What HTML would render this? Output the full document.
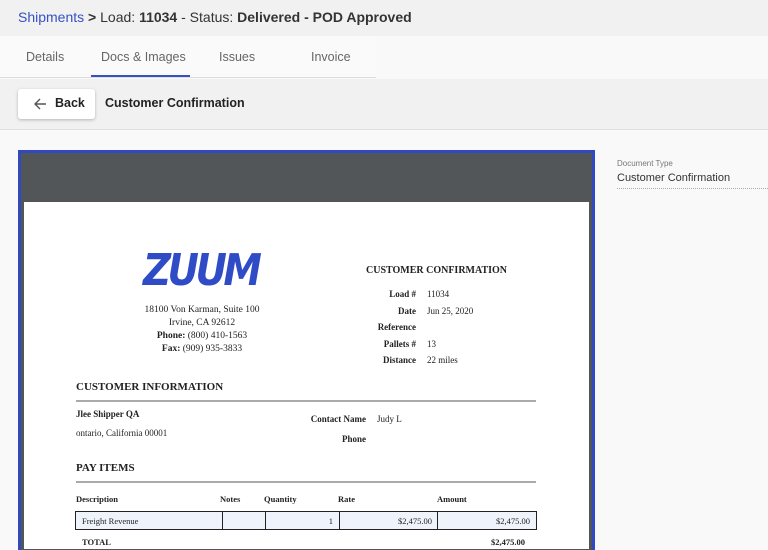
<!DOCTYPE html>
<html><head><style>
*{margin:0;padding:0;box-sizing:border-box}
body{width:768px;height:549px;overflow:hidden;background:#f9f9f9;font-family:"Liberation Sans",sans-serif;position:relative}
.a{position:absolute;white-space:nowrap}
.s{font-family:"Liberation Serif",serif;color:#222}
.b{font-weight:bold}
</style></head><body>
<div class="a" style="left:0;top:0;width:768px;height:36px;background:#f1f1f1"></div>
<div class="a" style="left:18px;top:9px;font-size:14px;color:#333"><span style="color:#3551c4">Shipments</span> <b>&gt;</b> Load: <b>11034</b> - Status: <b>Delivered - POD Approved</b></div>
<div class="a" style="left:0;top:36px;width:376px;height:42px;background:#fafafa;border-bottom:1px solid #ddd"></div>
<div class="a" style="left:26px;top:50px;font-size:12.5px;color:#666">Details</div>
<div class="a" style="left:101px;top:50px;font-size:12.5px;color:#666">Docs &amp; Images</div>
<div class="a" style="left:219px;top:50px;font-size:12.5px;color:#666">Issues</div>
<div class="a" style="left:311px;top:50px;font-size:12.5px;color:#666">Invoice</div>
<div class="a" style="left:91px;top:75px;width:99px;height:2px;background:#3551c4"></div>
<div class="a" style="left:0;top:79px;width:768px;height:51px;background:#f1f1f1;border-bottom:1px solid #e0e0e0"></div>
<div class="a" style="left:18px;top:89px;width:77px;height:30px;background:#fff;border-radius:3px;box-shadow:0 1px 3px rgba(0,0,0,.25)"></div>
<svg class="a" style="left:33px;top:97px" width="14" height="14" viewBox="0 0 14 14"><path d="M13 7H2M7 2L2 7l5 5" stroke="#555" stroke-width="1.4" fill="none"/></svg>
<div class="a" style="left:55px;top:96px;font-size:12.5px;font-weight:bold;color:#222">Back</div>
<div class="a" style="left:105px;top:96px;font-size:12.5px;font-weight:bold;color:#222">Customer Confirmation</div>

<div class="a" style="left:617px;top:159px;font-size:8px;color:#777">Document Type</div>
<div class="a" style="left:617px;top:172px;font-size:11px;color:#333">Customer Confirmation</div>
<div class="a" style="left:617px;top:188px;width:151px;border-top:1px dotted #aaa"></div>

<div class="a" style="left:18px;top:150px;width:577px;height:400px;background:#525659;border:3px solid #3049c0;border-bottom:none"></div>
<div class="a" style="left:24px;top:202px;width:565px;height:347px;background:#fff"></div>

<div class="a" style="left:143px;top:245px;font-size:44px;font-weight:900;font-style:italic;color:#2f4cc6;letter-spacing:-4px;transform:scaleX(0.88);transform-origin:left;font-family:'DejaVu Sans',sans-serif">ZUUM</div>
<div class="a s" style="left:143px;top:304px;width:118px;text-align:center;font-size:9.5px;line-height:13px">18100 Von Karman, Suite 100<br>Irvine, CA 92612<br><b>Phone:</b> (800) 410-1563<br><b>Fax:</b> (909) 935-3833</div>

<div class="a s b" style="left:366px;top:265px;font-size:10px">CUSTOMER CONFIRMATION</div>
<div class="a s b" style="left:300px;top:286px;width:116px;text-align:right;font-size:9px;line-height:16.6px">Load #<br>Date<br>Reference<br>Pallets #<br>Distance</div>
<div class="a s" style="left:427px;top:286px;font-size:9px;line-height:16.6px">11034<br>Jun 25, 2020<br>&nbsp;<br>13<br>22 miles</div>

<div class="a s b" style="left:76px;top:381px;font-size:11px">CUSTOMER INFORMATION</div>
<div class="a" style="left:76px;top:400px;width:460px;border-top:2px solid #aaa"></div>
<div class="a s b" style="left:76px;top:409px;font-size:9px">Jlee Shipper QA</div>
<div class="a s" style="left:76px;top:428px;font-size:9px">ontario, California 00001</div>
<div class="a s b" style="left:300px;top:414px;width:66px;text-align:right;font-size:9px">Contact Name</div>
<div class="a s" style="left:377px;top:414px;font-size:9px">Judy L</div>
<div class="a s b" style="left:300px;top:434px;width:66px;text-align:right;font-size:9px">Phone</div>

<div class="a s b" style="left:76px;top:462px;font-size:11px">PAY ITEMS</div>
<div class="a" style="left:76px;top:481px;width:460px;border-top:2px solid #aaa"></div>
<div class="a s b" style="left:76px;top:494px;font-size:8.5px">Description</div>
<div class="a s b" style="left:220px;top:494px;font-size:8.5px">Notes</div>
<div class="a s b" style="left:264px;top:494px;font-size:8.5px">Quantity</div>
<div class="a s b" style="left:338px;top:494px;font-size:8.5px">Rate</div>
<div class="a s b" style="left:437px;top:494px;font-size:8.5px">Amount</div>
<table class="a s" style="left:75px;top:511px;width:462px;height:19px;border-collapse:collapse;font-size:8.5px;background:#eef3fc">
<tr><td style="border:1.5px solid #222;width:147px;padding-left:6px">Freight Revenue</td><td style="border:1.5px solid #222;width:43px"></td><td style="border:1.5px solid #222;width:74px;text-align:right;padding-right:6px">1</td><td style="border:1.5px solid #222;width:98px;text-align:right;padding-right:5px">$2,475.00</td><td style="border:1.5px solid #222;text-align:right;padding-right:6px">$2,475.00</td></tr></table>
<div class="a s b" style="left:82px;top:537px;font-size:8.5px">TOTAL</div>
<div class="a s b" style="left:491px;top:537px;font-size:8.5px">$2,475.00</div>
</body></html>
